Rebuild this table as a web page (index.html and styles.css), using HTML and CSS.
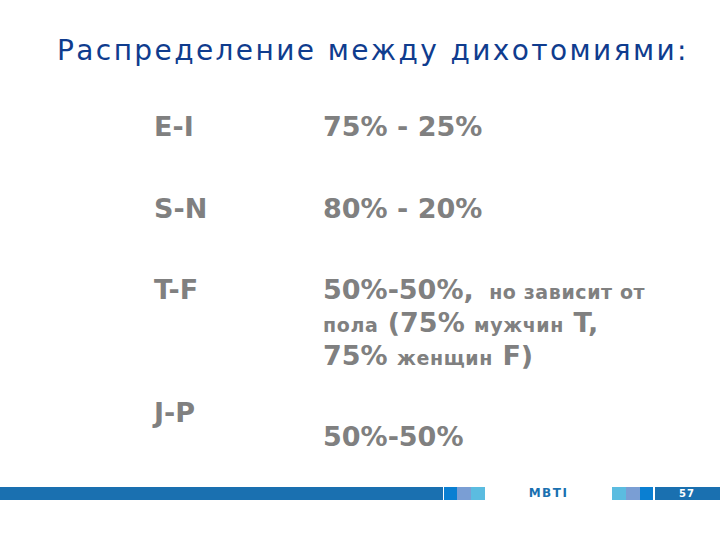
FILE: index.html
```html
<!DOCTYPE html>
<html lang="ru">
<head>
<meta charset="utf-8">
<title>MBTI</title>
<link rel="stylesheet" href="styles.css">
</head>
<body>
<div class="slide">
  <h1 class="title">Распределение между дихотомиями:</h1>
  <div class="table">
    <div class="row row-ei">
      <div class="key">E-I</div>
      <div class="val">75% - 25%</div>
    </div>
    <div class="row row-sn">
      <div class="key">S-N</div>
      <div class="val">80% - 20%</div>
    </div>
    <div class="row row-tf">
      <div class="key">T-F</div>
      <div class="val val-tf">50%-50%, <span class="small first">но зависит от пола</span> (75% <span class="small">мужчин</span> T,<br>75% <span class="small">женщин</span> F)</div>
    </div>
    <div class="row row-jp">
      <div class="key">J-P</div>
      <div class="val val-jp">50%-50%</div>
    </div>
  </div>
  <div class="footer">
    <div class="bar bar-left"></div>
    <div class="sq sq-blue sq-gap"></div>
    <div class="sq sq-lav"></div>
    <div class="sq sq-cyan"></div>
    <div class="brand">MBTI</div>
    <div class="sq sq-cyan"></div>
    <div class="sq sq-lav"></div>
    <div class="sq sq-blue"></div>
    <div class="bar bar-right"><span class="page">57</span></div>
  </div>
</div>
</body>
</html>
```
FILE: styles.css
```css
html, body {
  margin: 0;
  padding: 0;
  background: #ffffff;
}

.slide {
  width: 720px;
  height: 540px;
  display: flex;
  flex-direction: column;
  font-family: "DejaVu Sans", Verdana, sans-serif;
  overflow: hidden;
}

.title {
  margin: 0;
  padding: 35px 0 0 57px;
  font-size: 28px;
  line-height: 32px;
  font-weight: normal;
  letter-spacing: 2.4px;
  color: #0f3c8e;
  white-space: nowrap;
}

.table {
  flex: 1;
  padding-left: 154px;
  color: #808080;
  font-weight: bold;
  font-size: 27px;
  line-height: 34px;
}

.row {
  display: flex;
}

.key {
  width: 169px;
  flex: none;
}

.val {
  width: 340px;
}

.val-tf {
  line-height: 33px;
}

.row-ei { margin-top: 43px; }
.row-sn { margin-top: 48px; }
.row-tf { margin-top: 47px; }
.row-jp { margin-top: 24px; }
.val-jp { padding-top: 24px; }

.small {
  font-size: 19px;
  line-height: 20px;
  letter-spacing: 0.6px;
}

.first {
  margin-left: 6px;
}

.footer {
  display: flex;
  align-items: stretch;
  height: 13px;
  margin-bottom: 40px;
}

.bar {
  background: #1a70b0;
}

.bar-left {
  width: 443px;
}

.sq {
  width: 14px;
}

.sq-gap { margin-left: 1px; }
.sq-blue { background: #0a7fd2; width: 13px; }
.sq-lav { background: #7a9ed4; }
.sq-cyan { background: #5bbce0; }

.brand {
  width: 127px;
  text-align: center;
  font-size: 12px;
  line-height: 13px;
  font-weight: bold;
  letter-spacing: 1.5px;
  color: #1a70b0;
}

.bar-right {
  flex: 1;
  margin-left: 2px;
  display: flex;
  align-items: center;
  padding-left: 24px;
}

.page {
  font-size: 10px;
  font-weight: bold;
  color: #ffffff;
  letter-spacing: 1px;
}
```
